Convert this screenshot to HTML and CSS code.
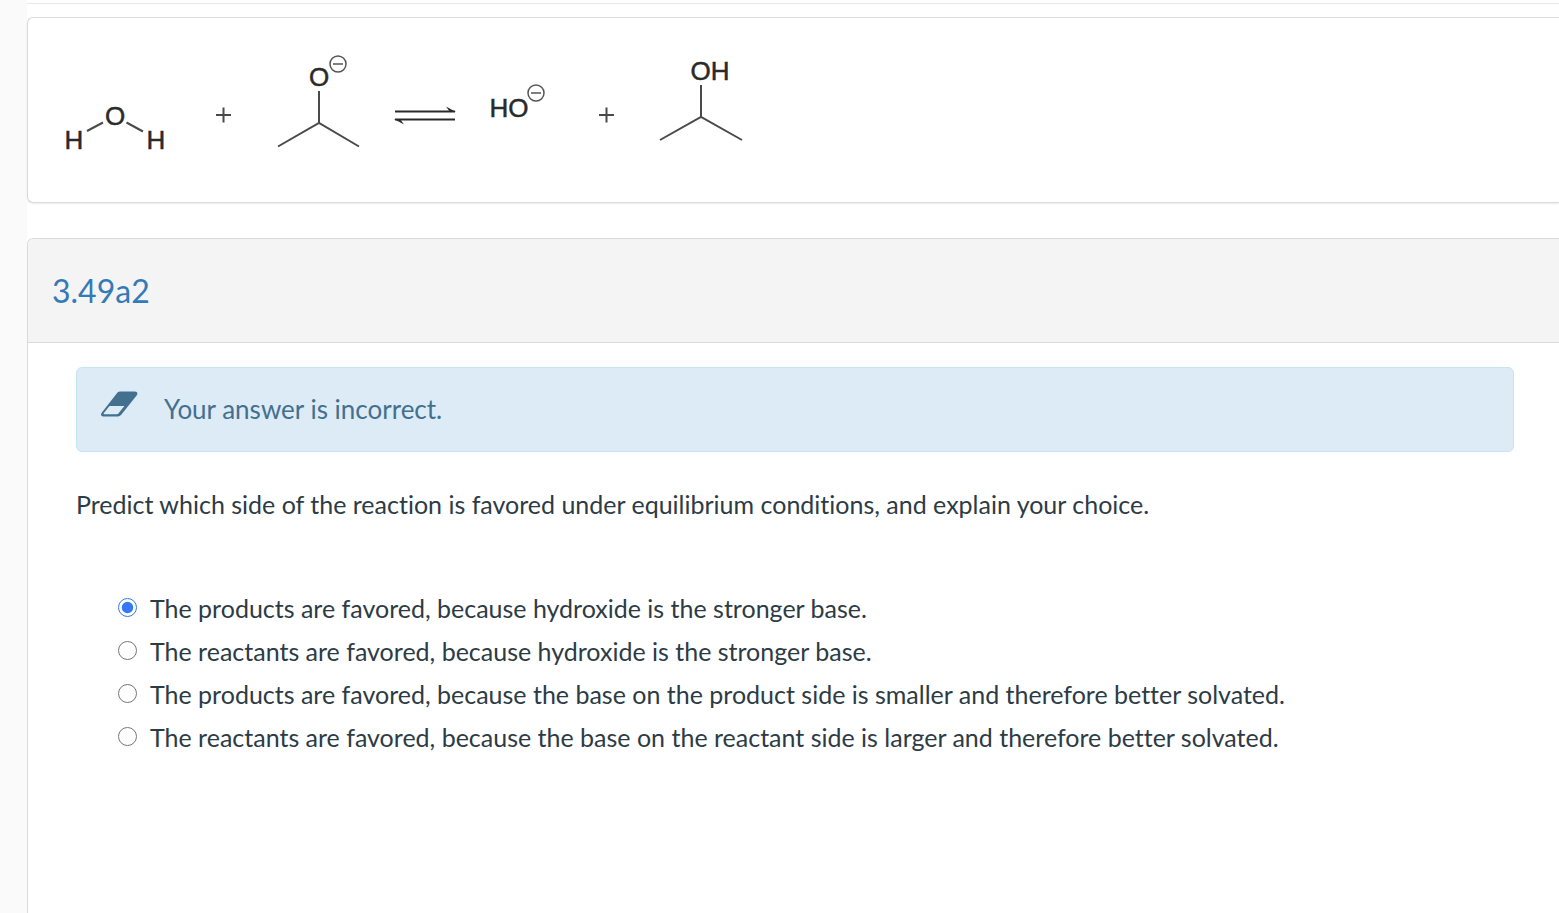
FILE: index.html
```html
<!DOCTYPE html>
<html lang="en">
<head>
  <meta charset="UTF-8">
  <meta name="viewport" content="width=device-width, initial-scale=1.0">
  <title>3.49a2</title>
  <link rel="stylesheet" href="styles.css">
</head>
<body>

  <main class="content">

    <!-- reaction scheme -->
    <section class="panel scheme">
      <svg class="reaction" viewBox="0 0 720 136" width="720" height="136" role="img" aria-label="Water plus isopropoxide in equilibrium with hydroxide plus isopropanol">
        <!-- water -->
        <g class="atom">
          <text x="22" y="107">H</text>
          <text x="63" y="83">O</text>
          <text x="104" y="107">H</text>
        </g>
        <path class="bond" d="M35 89 L51 80.500 M74.500 80.500 L91 89.500"/>

        <path class="plus" d="M164 73 H179 M171.500 65.500 V80.500"/>

        <!-- isopropoxide -->
        <g class="atom">
          <text x="267" y="44">O</text>
        </g>
        <circle class="charge" cx="286" cy="22" r="8"/>
        <path class="charge" d="M281 22 H291"/>
        <path class="bond" d="M267 49 V81 M226 104.500 L267 81 L307 104.500"/>

        <!-- equilibrium arrows -->
        <path class="arrow" d="M343 69.500 H403 M343 77.500 H403"/>
        <path class="arrow-head" d="M404 70 L394 64.500 L398 70 Z M342 77 L352 82.500 L348 77 Z"/>

        <!-- hydroxide -->
        <g class="atom">
          <text x="457" y="75">HO</text>
        </g>
        <circle class="charge" cx="484" cy="51" r="8"/>
        <path class="charge" d="M479 51 H489"/>

        <path class="plus" d="M547 73 H562 M554.500 65.500 V80.500"/>

        <!-- isopropanol -->
        <g class="atom">
          <text x="658" y="38">OH</text>
        </g>
        <path class="bond" d="M649 43 V75 M608 98 L649 75 L690 98"/>
      </svg>
    </section>

    <!-- question -->
    <section class="panel question">
      <header class="question-header">
        <h2><a href="#question">3.49a2</a></h2>
      </header>

      <div class="question-body" id="question">
        <div class="alert">
          <svg class="eraser" viewBox="0 0 38 26" width="38" height="26" aria-hidden="true">
            <path fill-rule="evenodd" d="M16.500 0.600 Q17.600 -0.600 19.300 -0.600 H33.500 Q37.500 -0.300 36 3 L20 23 Q18.700 24.400 17 24.400 H2 Q-1 24 0.500 21 Z M8.500 14 L2.700 21.200 Q2.400 22.100 3.200 22.200 H15.800 Q16.800 22.200 17.400 21.500 L23.400 14 Z"/>
          </svg>
          <span>Your answer is incorrect.</span>
        </div>

        <form>
          <fieldset class="choices">
            <legend>Predict which side of the reaction is favored under equilibrium conditions, and explain your choice.</legend>
            <label class="choice"><input type="radio" name="answer" value="1" checked>The products are favored, because hydroxide is the stronger base.</label>
            <label class="choice"><input type="radio" name="answer" value="2">The reactants are favored, because hydroxide is the stronger base.</label>
            <label class="choice"><input type="radio" name="answer" value="3">The products are favored, because the base on the product side is smaller and therefore better solvated.</label>
            <label class="choice"><input type="radio" name="answer" value="4">The reactants are favored, because the base on the reactant side is larger and therefore better solvated.</label>
          </fieldset>
        </form>
      </div>
    </section>

  </main>

</body>
</html>
```

FILE: styles.css
```css
* {
  box-sizing: border-box;
}

body {
  margin: 0;
  padding-left: 27px;
  background: #fafafa;
  color: #2d3b45;
  font-family: Lato, sans-serif;
  font-size: 25px;
  font-variant-ligatures: none;
  line-height: 35px;
}

.content {
  display: flex;
  flex-direction: column;
  gap: 35px;
  min-height: 100vh;
  padding-top: 17px;
  background: linear-gradient(#e8e8e8, #e8e8e8) 0 3px / 100% 1px no-repeat #fff;
}

/* panels run off the right edge */
.panel {
  border: 1px solid #d9dadc;
  border-right: none;
  border-radius: 6px 0 0 6px;
  background: #fff;
}

.scheme {
  padding: 24px;
  box-shadow: 0 1px 2px rgba(0, 0, 0, 0.08);
}

/* reaction drawing */
.reaction {
  display: block;
  max-width: 100%;
}

.atom {
  fill: #2a2a2a;
  font-family: "Liberation Sans", Arial, sans-serif;
  font-size: 26px;
  text-anchor: middle;
  stroke: #2a2a2a;
  stroke-width: 0.5;
}

.bond,
.plus,
.arrow,
.charge {
  fill: none;
  stroke: #4a4a4a;
  stroke-width: 2;
}

.arrow {
  stroke: #2a2a2a;
}

.arrow-head {
  fill: #2a2a2a;
}

.charge {
  stroke: #555;
  stroke-width: 1.5;
}

/* question */
.question {
  flex: 1;
  border-bottom: none;
  border-bottom-left-radius: 0;
}

.question-header {
  padding: 30px 24px;
  border-bottom: 1px solid #d9dadc;
  border-top-left-radius: 6px;
  background: #f4f4f4;
}

.question-header h2 {
  margin: 0;
  font-size: 32px;
  font-weight: 400;
  line-height: 43px;
}

.question-header a {
  color: #337ab7;
  text-decoration: none;
}

.question-body {
  padding: 24px 45px 24px 48px;
}

.alert {
  display: flex;
  gap: 25px;
  padding: 24px;
  border: 1px solid #c5e6ee;
  border-radius: 6px;
  background: #ddebf6;
  color: #44708f;
  font-size: 26px;
}

.eraser {
  overflow: visible;
  fill: #44708f;
}

.choices {
  min-width: 0;
  margin: 35px 0 0;
  padding: 0;
  border: none;
}

.choices legend {
  margin-bottom: 69px;
  padding: 0;
}

.choice {
  display: flex;
  align-items: flex-start;
  gap: 13px;
  margin: 0 0 8px 42px;
}

.choice input {
  flex: none;
  width: 19px;
  height: 19px;
  margin: 7px 0 0;
  accent-color: #3478f6;
}
```
